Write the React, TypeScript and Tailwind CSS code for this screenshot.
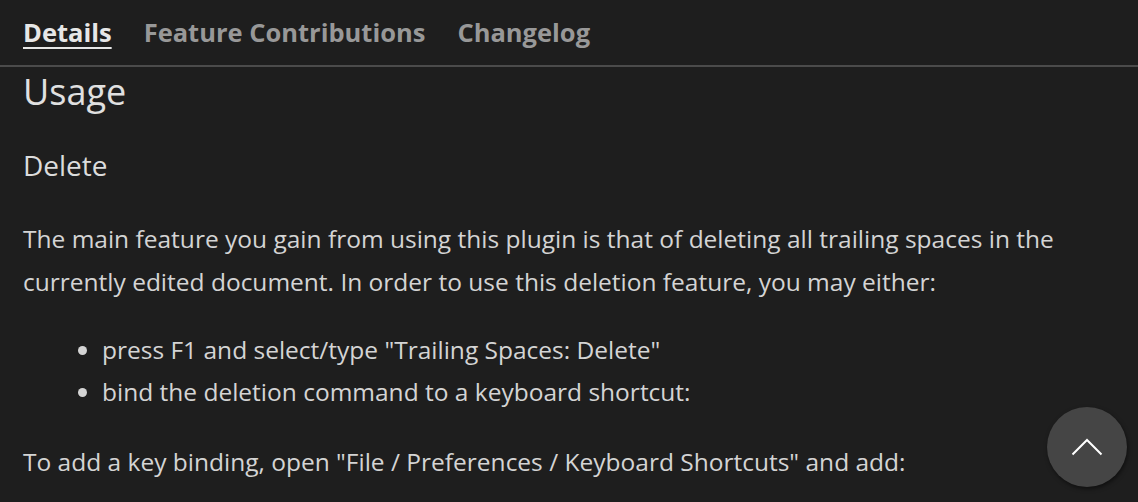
const font = { fontFamily: '"Open Sans", "Noto Sans", sans-serif' };

export default function App() {
  return (
    <div
      className="relative w-[1138px] h-[502px] overflow-hidden bg-[#1e1e1e] text-[#d4d4d4]"
      style={font}
    >
      <nav className="flex items-end gap-8 h-[67px] px-[23px] border-b-2 border-[#4b4b4b] pb-[20px]">
        <span className="text-[25.5px] font-bold text-[#e7e7e7] underline underline-offset-[5px] decoration-2 leading-none">
          Details
        </span>
        <span className="text-[25.5px] font-bold text-[#989898] leading-none">
          Feature Contributions
        </span>
        <span className="text-[25.5px] font-bold text-[#989898] leading-none">
          Changelog
        </span>
      </nav>
      <main className="px-[23px]">
        <h1 className="text-[36px] leading-[48px] text-[#e0e0e0] mt-[1px]">Usage</h1>
        <h2 className="text-[28px] leading-[36px] text-[#dcdcdc] mt-[31px]">Delete</h2>
        <p className="text-[24.5px] leading-[43px] mt-[34px] pr-[30px]">
          The main feature you gain from using this plugin is that of deleting all trailing spaces in the
          currently edited document. In order to use this deletion feature, you may either:
        </p>
        <ul className="list-disc pl-[79px] mt-[26px] text-[24.5px] leading-[42px]">
          <li>press F1 and select/type "Trailing Spaces: Delete"</li>
          <li>bind the deletion command to a keyboard shortcut:</li>
        </ul>
        <p className="text-[24.5px] leading-[43px] mt-[27px]">
          To add a key binding, open "File / Preferences / Keyboard Shortcuts" and add:
        </p>
      </main>
      <button className="absolute left-[1047px] top-[407px] w-[80px] h-[80px] rounded-full bg-[#454545] shadow-[1px_2px_4px_rgba(0,0,0,0.5)] flex items-center justify-center">
        <svg width="80" height="80" viewBox="0 0 80 80" className="absolute inset-0">
          <polyline
            points="25.5,47.5 40,33 54.5,47.5"
            fill="none"
            stroke="#ffffff"
            strokeWidth="2"
          />
        </svg>
      </button>
    </div>
  );
}
